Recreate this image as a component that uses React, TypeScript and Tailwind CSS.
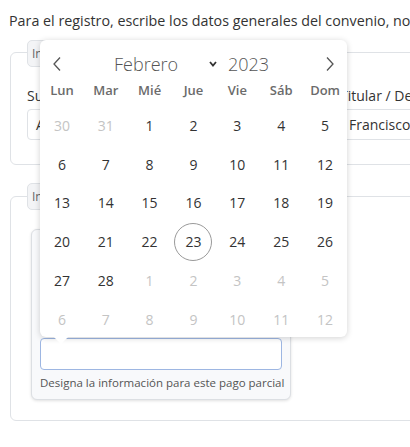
import React from "react";

const weekdays = ["Lun", "Mar", "Mié", "Jue", "Vie", "Sáb", "Dom"];
type Day = { n: number; muted: boolean; sel?: boolean };
const rows: Day[][] = [
  [30, 31, 1, 2, 3, 4, 5].map((n, i) => ({ n, muted: i < 2 })),
  [6, 7, 8, 9, 10, 11, 12].map((n) => ({ n, muted: false })),
  [13, 14, 15, 16, 17, 18, 19].map((n) => ({ n, muted: false })),
  [20, 21, 22, 23, 24, 25, 26].map((n) => ({ n, muted: false, sel: n === 23 })),
  [27, 28, 1, 2, 3, 4, 5].map((n, i) => ({ n, muted: i > 1 })),
  [6, 7, 8, 9, 10, 11, 12].map((n) => ({ n, muted: true })),
];

function Chevron({ dir }: { dir: "left" | "right" }) {
  return (
    <svg width="10" height="16" viewBox="0 0 10 16" fill="none">
      {dir === "left" ? (
        <path d="M8 1.5 L2 8 L8 14.5" stroke="#555" strokeWidth="1.3" />
      ) : (
        <path d="M2 1.5 L8 8 L2 14.5" stroke="#555" strokeWidth="1.3" />
      )}
    </svg>
  );
}

export default function App() {
  return (
    <div className="relative w-[410px] h-[447px] overflow-hidden bg-white font-['Open_Sans','Noto_Sans',sans-serif] text-[#333]">
      <p className="pl-[9px] pt-[11px] text-[14.3px] leading-[20px] whitespace-nowrap">
        Para el registro, escribe los datos generales del convenio, no olvides
      </p>

      {/* Card 1 */}
      <div className="relative ml-[10px] mt-[21px] w-[430px] h-[113px] rounded-[6px] border border-[#dfe2e6]">
        <div className="absolute left-[16px] -top-[13px] w-[140px] h-[27px] rounded-[5px] border border-[#dfe2e6] bg-[#f3f4f6] pl-[4px] text-[12px] leading-[25px] text-[#666]">
          Información general
        </div>
        <div className="flex gap-[20px] pl-[16px] pt-[33px]">
          <div className="w-[293px] shrink-0">
            <div className="text-[14px] leading-[20px]">Subsecretaría</div>
            <div className="mt-[3px] h-[31px] rounded-[4px] border border-[#dfe2e6] pl-[8px] text-[14px] leading-[29px]">
              A
            </div>
          </div>
          <div className="w-[120px] shrink-0">
            <div className="text-[14px] leading-[20px] whitespace-nowrap">Titular / Delegado</div>
            <div className="mt-[3px] h-[31px] rounded-[4px] border border-[#dfe2e6] pl-[8px] text-[14px] leading-[29px] whitespace-nowrap">
              Francisco
            </div>
          </div>
        </div>
      </div>

      {/* Card 2 */}
      <div className="relative ml-[10px] mt-[31px] w-[430px] h-[225px] rounded-[6px] border border-[#dfe2e6]">
        <div className="absolute left-[16px] -top-[14px] w-[140px] h-[27px] rounded-[5px] border border-[#dfe2e6] bg-[#f3f4f6] pl-[4px] text-[12px] leading-[25px] text-[#666]">
          Información de pagos
        </div>
        <div className="ml-[20px] mt-[32px] w-[260px] h-[171px] rounded-[6px] border border-[#dcdfe3] bg-[#f8f9fb] px-[8px] pt-[108px] shadow-[0_1px_3px_rgba(0,0,0,0.12)]">
          <div className="h-[32px] rounded-[4px] border border-[#9db6e2] bg-white" />
          <div className="mt-[4px] text-[11.5px] leading-[18px] text-[#555] whitespace-nowrap">
            Designa la información para este pago parcial
          </div>
        </div>
      </div>

      {/* Datepicker popup */}
      <div className="absolute left-[40px] top-[40px] w-[307px] h-[297px] rounded-[6px] bg-white shadow-[0_1px_6px_rgba(0,0,0,0.18)]">
        <div className="flex h-[32px] items-center mt-[8px]">
          <div className="flex w-[34px] justify-center">
            <Chevron dir="left" />
          </div>
          <div className="flex w-[145px] items-center justify-between pl-[40px] pr-[2px]">
            <span className="text-[18px] font-light text-[#555]">Febrero</span>
            <svg width="8" height="6" viewBox="0 0 8 6">
              <path d="M1 1 L4 4.5 L7 1" stroke="#333" strokeWidth="1.8" fill="none" />
            </svg>
          </div>
          <span className="ml-[9px] text-[18px] font-light text-[#555]">2023</span>
          <div className="flex-1" />
          <div className="flex w-[34px] justify-center">
            <Chevron dir="right" />
          </div>
        </div>
        <div className="grid h-[22px] grid-cols-7 items-center">
          {weekdays.map((w) => (
            <div key={w} className="text-center text-[13px] font-semibold text-[#6b6b6b]">
              {w}
            </div>
          ))}
        </div>
        <div className="mt-[4px]">
          {rows.map((r, i) => (
            <div key={i} className="grid h-[38.8px] grid-cols-7 items-center">
              {r.map((d, j) => (
                <div key={j} className="flex justify-center">
                  <span
                    className={
                      "flex h-[38px] w-[38px] items-center justify-center rounded-full text-[14px] " +
                      (d.sel ? "border border-[#9a9a9a] " : "") +
                      (d.muted ? "text-[#c4c4c4]" : "text-[#333]")
                    }
                  >
                    {d.n}
                  </span>
                </div>
              ))}
            </div>
          ))}
        </div>
        <div className="absolute left-[16px] -bottom-[5px] h-[10px] w-[10px] rotate-45 bg-white" />
      </div>
    </div>
  );
}
